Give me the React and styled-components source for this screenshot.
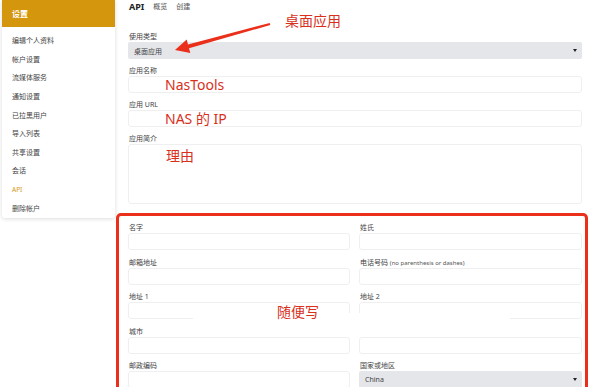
import React from 'react';
import styled, { createGlobalStyle } from 'styled-components';

const GlobalStyle = createGlobalStyle`
    body {
        margin: 0;
        background: #fff;
        font-family: "Noto Sans", "Noto Sans CJK SC", sans-serif;
    }
`;

const Page = styled.div`
    position: relative;
    display: flex;
    align-items: flex-start;
    width: 600px;
    height: 387px;
    overflow: hidden;
    background: #fff;
`;

const Sidebar = styled.nav`
    width: 113px;
    margin-left: 2px;
    margin-right: 13px;
    background: #fff;
    border-radius: 0 0 3px 3px;
    box-shadow: 0 1px 4px rgba(0, 0, 0, 0.14);
    padding-bottom: 1px;
`;

const SideHeader = styled.div`
    height: 27px;
    display: flex;
    align-items: center;
    padding-left: 10px;
    background: #d4960c;
    color: #fff;
    font-size: 8px;
    font-weight: 700;
`;

const SideList = styled.ul`
    list-style: none;
    margin: 0;
    padding: 4px 0 0;
`;

const SideItem = styled.li`
    height: 18.6px;
    display: flex;
    align-items: center;
    padding-left: 10px;
    font-size: ${p => (p.active ? '6.5px' : '7px')};
    color: ${p => (p.active ? '#d4960c' : '#444')};
`;

const Main = styled.main`
    width: 454px;
    display: flex;
    flex-direction: column;
`;

const Tabs = styled.div`
    height: 12px;
    display: flex;
    align-items: center;
    gap: 9px;
    margin-bottom: 20px;
    padding-left: 1px;
`;

const Tab = styled.span`
    font-size: ${p => (p.current ? '9px' : '7px')};
    font-weight: ${p => (p.current ? 700 : 400)};
    color: ${p => (p.current ? '#222' : '#555')};
`;

const Field = styled.div`
    display: flex;
    flex-direction: column;
    margin-bottom: ${p => p.gap || 7}px;
`;

const Label = styled.label`
    height: 10px;
    line-height: 10px;
    font-size: 7px;
    color: #444;
    padding-left: 1px;
    white-space: nowrap;

    small {
        font-size: 6px;
        color: #555;
    }
`;

const Input = styled.div`
    height: ${p => p.h || 17}px;
    box-sizing: border-box;
    border: 1px solid #efefef;
    border-radius: 3px;
    background: #fff;
`;

const Select = styled.div`
    height: 17px;
    box-sizing: border-box;
    display: flex;
    align-items: center;
    justify-content: space-between;
    padding: 0 5px 0 6px;
    background: #e4e6ea;
    border-radius: 2px;
    font-size: 7px;
    color: #444;

    &::after {
        content: '';
        border-left: 2px solid transparent;
        border-right: 2px solid transparent;
        border-top: 3px solid #222;
    }
`;

const Grid = styled.div`
    display: grid;
    grid-template-columns: 222px 223px;
    column-gap: 9px;
`;

const Note = styled.span`
    position: absolute;
    color: #d8301c;
    font-size: 14px;
    line-height: 1;
    font-family: "Noto Sans", "Noto Sans CJK SC", sans-serif;
    white-space: nowrap;
`;

const RedFrame = styled.div`
    position: absolute;
    left: 116px;
    top: 213px;
    width: 466px;
    height: 190px;
    border: 3px solid #ea2f1a;
    border-radius: 5px;
    pointer-events: none;
`;

const Patch = styled.div`
    position: absolute;
    left: 193px;
    top: 313px;
    width: 317px;
    height: 24px;
    background: #fff;
`;

const ArrowSvg = styled.svg`
    position: absolute;
    left: 0;
    top: 0;
`;

const sideItems = ['编辑个人资料', '帐户设置', '流媒体服务', '通知设置', '已拉黑用户', '导入列表', '共享设置', '会话', 'API', '删除帐户'];

const rows = [
    ['名字', '姓氏'],
    ['邮箱地址', <>电话号码 <small>(no parenthesis or dashes)</small></>],
    ['地址 1', '地址 2'],
    ['城市', ''],
];

export default function App() {
    return (
        <Page>
            <GlobalStyle />
            <Sidebar>
                <SideHeader>设置</SideHeader>
                <SideList>
                    {sideItems.map(item => (
                        <SideItem key={item} active={item === 'API'}>{item}</SideItem>
                    ))}
                </SideList>
            </Sidebar>
            <Main>
                <Tabs>
                    <Tab current>API</Tab>
                    <Tab>概览</Tab>
                    <Tab>创建</Tab>
                </Tabs>
                <Field>
                    <Label>使用类型</Label>
                    <Select>桌面应用</Select>
                </Field>
                <Field>
                    <Label>应用名称</Label>
                    <Input />
                </Field>
                <Field>
                    <Label>应用 URL</Label>
                    <Input />
                </Field>
                <Field gap={19}>
                    <Label>应用简介</Label>
                    <Input h={60} />
                </Field>
                <Grid>
                    {rows.map(([a, b], i) => (
                        <React.Fragment key={i}>
                            <Field gap={7.5}>
                                <Label>{a}</Label>
                                <Input />
                            </Field>
                            <Field gap={7.5}>
                                <Label>{b}</Label>
                                <Input />
                            </Field>
                        </React.Fragment>
                    ))}
                    <Field>
                        <Label>邮政编码</Label>
                        <Input />
                    </Field>
                    <Field>
                        <Label>国家或地区</Label>
                        <Select>China</Select>
                    </Field>
                </Grid>
            </Main>

            <Patch />
            <RedFrame />
            <ArrowSvg width="600" height="387" viewBox="0 0 600 387">
                <polygon
                    points="270.3,25 189,48.2 190.3,53 175,50 186.7,39.6 188,44.4 269.7,23"
                    fill="#ea2f1a"
                />
            </ArrowSvg>
            <Note style={{ left: 285, top: 14 }}>桌面应用</Note>
            <Note style={{ left: 165, top: 78 }}>NasTools</Note>
            <Note style={{ left: 165, top: 112 }}>NAS 的 IP</Note>
            <Note style={{ left: 166, top: 149 }}>理由</Note>
            <Note style={{ left: 277, top: 305 }}>随便写</Note>
        </Page>
    );
}
